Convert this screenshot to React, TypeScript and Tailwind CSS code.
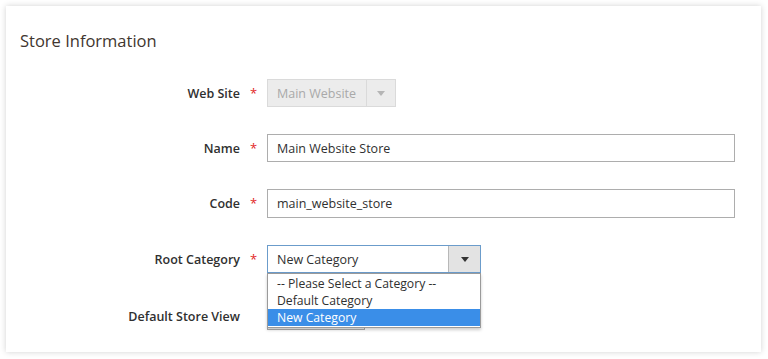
import React from "react";

const font = { fontFamily: '"Open Sans", "Noto Sans", Arial, sans-serif' };

function Caret({ color }: { color: string }) {
  return (
    <svg width="8" height="5" viewBox="0 0 8 5">
      <path d="M0 0 L8 0 L4 5 Z" fill={color} />
    </svg>
  );
}

function Row({
  label,
  required = true,
  children,
  className = "",
}: {
  label: string;
  required?: boolean;
  children?: React.ReactNode;
  className?: string;
}) {
  return (
    <div className={`flex items-center h-[28px] ${className}`}>
      <div className="w-[234px] pt-[2px] text-right text-[12.5px] font-semibold text-[#303030]">{label}</div>
      <div className="w-[27px] pt-[2px] text-center text-[13px] text-[#e22626]">{required ? "*" : ""}</div>
      {children}
    </div>
  );
}

export default function App() {
  return (
    <div className="w-[768px] h-[359px] bg-white p-[6px]" style={font}>
      <div className="relative w-[755px] h-[346px] bg-white shadow-[0_0_6px_rgba(0,0,0,0.18)]">
        <div className="pt-[23px] pl-[14px] text-[16.5px] font-medium leading-[24px] text-[#41362f]">Store Information</div>
        <div className="mt-[26px] flex flex-col">
          <Row label="Web Site">
            <div className="flex h-[28px] w-[129px] border border-[#dadada] bg-[#ececec]">
              <div className="flex-1 flex items-center pl-[9px] pt-[2px] text-[12.5px] text-[#a9a9a9]">Main Website</div>
              <div className="w-[29px] flex items-center justify-center border-l border-[#dadada]">
                <Caret color="#b5b5b5" />
              </div>
            </div>
          </Row>
          <Row label="Name" className="mt-[27px]">
            <div className="flex items-center h-[28px] w-[468px] border border-[#adadad] pl-[9px] pt-[2px] text-[12.5px] text-[#303030]">
              Main Website Store
            </div>
          </Row>
          <Row label="Code" className="mt-[27px]">
            <div className="flex items-center h-[29px] w-[468px] border border-[#adadad] pl-[9px] pt-[2px] text-[12.5px] text-[#303030]">
              main_website_store
            </div>
          </Row>
          <Row label="Root Category" className="mt-[28px]">
            <div className="flex h-[28px] w-[214px] border border-[#6b9ccb] bg-white">
              <div className="flex-1 flex items-center pl-[9px] pt-[2px] text-[12.5px] text-[#303030]">New Category</div>
              <div className="w-[32px] flex items-center justify-center border-l border-[#b8b8b8] bg-[#e3e3e3]">
                <Caret color="#333333" />
              </div>
            </div>
          </Row>
        </div>
        <Row label="Default Store View" required={false} className="mt-[29px]">
          <div className="h-[28px] w-[98px] border border-[#adadad] bg-[#f3f3f3]" />
        </Row>
        <div className="absolute left-[261px] top-[267px] w-[214px] border border-[#9a9a9a] bg-white py-[1px] shadow-[0_2px_3px_rgba(0,0,0,0.2)] text-[12.2px] text-[#303030]">
          <div className="h-[17px] leading-[17px] pl-[9px]">-- Please Select a Category --</div>
          <div className="h-[17px] leading-[17px] pl-[9px]">Default Category</div>
          <div className="h-[17px] leading-[17px] pl-[9px] bg-[#3a8ee8] text-white">New Category</div>
        </div>
      </div>
    </div>
  );
}
